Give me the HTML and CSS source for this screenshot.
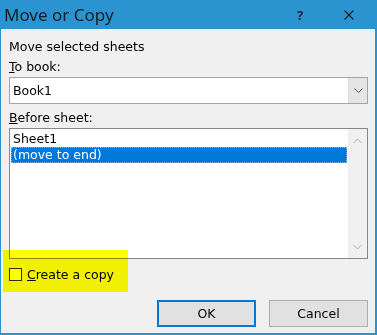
FILE: index.html
```html
<!DOCTYPE html>
<html>
<head>
<meta charset="utf-8">
<link rel="stylesheet" href="styles.css">
</head>
<body>
<div class="window">
  <div class="titlebar">
    <span class="title">Move or Copy</span>
    <span class="help">?</span>
    <span class="close"><svg width="10" height="10" viewBox="0 0 10 10"><path d="M0.5 0.5 L9.5 9.5 M9.5 0.5 L0.5 9.5" stroke="#1a1a1a" stroke-width="1.1" fill="none"/></svg></span>
  </div>
  <div class="content">
    <div class="label first">Move selected sheets</div>
    <div class="label second"><u>T</u>o book:</div>
    <div class="combo">
      <span class="combo-text">Book1</span>
      <span class="combo-btn"><svg width="9" height="6" viewBox="0 0 9 6"><path d="M0.5 0.5 L4.5 4.5 L8.5 0.5" stroke="#555" stroke-width="1" fill="none"/></svg></span>
    </div>
    <div class="label third"><u>B</u>efore sheet:</div>
    <div class="listbox">
      <div class="items">
        <div class="item">Sheet1</div>
        <div class="item selected">(move to end)</div>
      </div>
      <div class="scrollbar">
        <svg width="9" height="6" viewBox="0 0 9 6"><path d="M0.5 5 L4.5 1 L8.5 5" stroke="#a8a8a8" stroke-width="1" fill="none"/></svg>
        <svg width="9" height="6" viewBox="0 0 9 6"><path d="M0.5 1 L4.5 5 L8.5 1" stroke="#a8a8a8" stroke-width="1" fill="none"/></svg>
      </div>
    </div>
    <div class="check-row">
      <span class="checkbox"></span>
      <span class="check-label"><u>C</u>reate a copy</span>
    </div>
    <div class="buttons">
      <button class="btn default">OK</button>
      <button class="btn">Cancel</button>
    </div>
    <div class="highlight"></div>
  </div>
</div>
</body>
</html>
```
FILE: styles.css
```css
html, body {
  margin: 0;
  padding: 0;
}
body {
  width: 377px;
  height: 335px;
  overflow: hidden;
  background: #f0f0f0;
}
.window {
  width: 377px;
  height: 335px;
  box-sizing: border-box;
  border-left: 1px solid #2b94d0;
  border-right: 2px solid #2b94d0;
  border-bottom: 2px solid #2b94d0;
  display: flex;
  flex-direction: column;
  font-family: "DejaVu Sans", sans-serif;
  font-size: 12.5px;
  color: #000;
}
.titlebar {
  height: 29px;
  background: #2b94d0;
  display: flex;
  align-items: center;
  margin-left: -1px;
  margin-right: -2px;
  padding-left: 4px;
}
.title {
  font-family: "Noto Sans", sans-serif;
  font-size: 17px;
  color: #141c26;
  flex: 1;
  margin-top: -1px;
}
.help {
  font-family: "Noto Sans", sans-serif;
  font-weight: bold;
  font-size: 13px;
  color: #1a2430;
  width: 12px;
  margin-right: 35px;
}
.close {
  display: flex;
  width: 10px;
  margin-right: 23px;
}
.content {
  position: relative;
  flex: 1;
  background: #f0f0f0;
  padding: 10px 7px 0 8px;
  display: flex;
  flex-direction: column;
}
.label {
  line-height: 15px;
  height: 15px;
}
.second {
  margin-top: 5px;
}
.third {
  margin-top: 6px;
}
.combo {
  margin-top: 3px;
  height: 27px;
  box-sizing: border-box;
  border: 1px solid #a5a5a5;
  background: #fff;
  display: flex;
  align-items: stretch;
}
.combo-text {
  flex: 1;
  padding-left: 3px;
  line-height: 25px;
}
.combo-btn {
  width: 18px;
  background: #e5e5e5;
  border-left: 1px solid #dcdcdc;
  display: flex;
  align-items: center;
  justify-content: center;
}
.listbox {
  margin-top: 3px;
  height: 131px;
  box-sizing: border-box;
  border: 1px solid #828790;
  background: #fff;
  display: flex;
}
.items {
  flex: 1;
  padding: 2px 1px 0 1px;
}
.item {
  height: 16px;
  line-height: 16px;
  padding-left: 2px;
}
.item.selected {
  background: #0078d7;
  color: #fff;
  outline: 1px dotted #8fb8e0;
  outline-offset: -1px;
}
.scrollbar {
  width: 19px;
  background: #f0f0f0;
  display: flex;
  flex-direction: column;
  justify-content: space-between;
  align-items: center;
  padding: 9px 0 8px;
}
.check-row {
  margin-top: 8px;
  display: flex;
  align-items: center;
  height: 15px;
}
.checkbox {
  width: 13px;
  height: 13px;
  box-sizing: border-box;
  border: 1px solid #333;
  background: #fff;
  margin-right: 5px;
}
.buttons {
  margin-top: 18px;
  display: flex;
  justify-content: flex-end;
  gap: 13px;
}
.btn {
  width: 99px;
  height: 27px;
  box-sizing: border-box;
  border: 1px solid #adadad;
  background: #e1e1e1;
  font-family: "DejaVu Sans", sans-serif;
  font-size: 12.5px;
  color: #000;
  padding: 0;
}
.btn.default {
  border: 2px solid #0078d7;
}
.highlight {
  position: absolute;
  left: 2px;
  top: 221px;
  width: 125px;
  height: 42px;
  background: #ffff00;
  mix-blend-mode: multiply;
}
```
